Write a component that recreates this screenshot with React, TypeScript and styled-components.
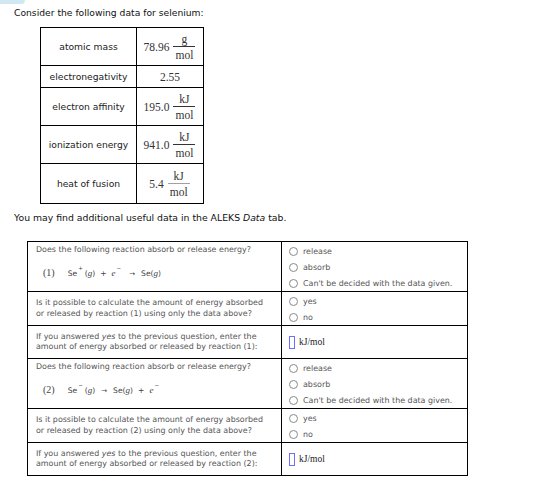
import React from "react";
import styled, { createGlobalStyle } from "styled-components";

const GlobalStyle = createGlobalStyle`
  html, body {
    margin: 0;
    padding: 0;
    background: #ffffff;
  }
  body {
    font-family: "DejaVu Sans", Verdana, sans-serif;
  }
  td {
    box-sizing: border-box;
  }
`;

const Page = styled.div`
  width: 554px;
  height: 478px;
  overflow: hidden;
  display: flex;
  flex-direction: column;
`;

const TopTab = styled.div`
  width: 25px;
  height: 4px;
  flex-shrink: 0;
  background: #cfe8f2;
  border-bottom-right-radius: 6px;
`;

const Title = styled.div`
  margin: 2px 0 0 14px;
  font-size: 9.2px;
  line-height: 14px;
  color: #111;
`;

const DataTable = styled.table`
  margin: 7px 0 0 40px;
  border-collapse: collapse;
  table-layout: fixed;
  width: 164px;
`;

const LabelCell = styled.td<{ $h: number }>`
  width: 96px;
  height: ${(p) => p.$h}px;
  border: 1px solid #000;
  padding: 0;
  text-align: center;
  font-size: 9.2px;
  color: #222;
`;

const ValueCell = styled.td`
  border: 1px solid #000;
  padding: 0;
  text-align: center;
  font-family: "Liberation Serif", "Times New Roman", serif;
  font-size: 11.5px;
  color: #333;
`;

const ValueWrap = styled.span`
  display: inline-flex;
  align-items: center;
  gap: 3px;
`;

const Frac = styled.span`
  display: inline-flex;
  flex-direction: column;
  align-items: center;
  line-height: 12px;
  padding: 0 1px;
`;

const FracBar = styled.span<{ $light?: boolean }>`
  align-self: stretch;
  height: 1px;
  margin: 1px 0 2px;
  background: ${(p) => (p.$light ? "#a0a0a0" : "#333")};
`;

const FracPart = styled.span`
  padding: 0 2px;
`;

const Note = styled.div`
  margin: 7px 0 0 14px;
  font-size: 9.3px;
  line-height: 14px;
  color: #111;
  em {
    font-style: italic;
  }
`;

const QTable = styled.table`
  margin: 16px 0 0 27px;
  border-collapse: collapse;
  table-layout: fixed;
  width: 441px;
`;

const QCell = styled.td<{ $top?: boolean; $h: number }>`
  width: 254px;
  height: ${(p) => p.$h}px;
  border: 1px solid #000;
  padding: ${(p) => (p.$top ? "3px 4px 0 8px" : "0 4px 0 8px")};
  vertical-align: ${(p) => (p.$top ? "top" : "middle")};
  font-size: 7.95px;
  line-height: 10.5px;
  color: #555;
  white-space: nowrap;
  em {
    font-style: italic;
  }
`;

const ACell = styled.td<{ $top?: boolean }>`
  border: 1px solid #000;
  padding: ${(p) => (p.$top ? "1px 0 0 7px" : "0 0 0 7px")};
  vertical-align: ${(p) => (p.$top ? "top" : "middle")};
`;

const Reaction = styled.div`
  margin: 11px 0 0 7px;
  line-height: 12px;
  white-space: nowrap;
  font-size: 7.6px;
  color: #444;
`;

const Num = styled.span`
  font-family: "Liberation Serif", "Times New Roman", serif;
  font-size: 10px;
  margin-right: 13px;
`;

const Sup = styled.sup`
  font-size: 5.5px;
  line-height: 0;
  vertical-align: 6px;
  margin: 0 2px 0 1px;
`;

const Ital = styled.span`
  font-family: "Liberation Serif", "Times New Roman", serif;
  font-style: italic;
  font-size: 9px;
`;

const Op = styled.span`
  margin: 0 5px;
`;

const Arrow = styled.span`
  margin: 0 6px;
  font-size: 7px;
`;

const Options = styled.div`
  display: flex;
  flex-direction: column;
`;

const Option = styled.label`
  display: flex;
  align-items: center;
  height: 16px;
  gap: 5px;
  font-size: 7.95px;
  color: #555;
`;

const Radio = styled.span`
  width: 7px;
  height: 7px;
  border: 1px solid #8a8a8a;
  border-radius: 50%;
  background: #fff;
  flex-shrink: 0;
`;

const AnswerLine = styled.div`
  display: flex;
  align-items: center;
  gap: 4px;
  font-family: "Liberation Serif", "Times New Roman", serif;
  font-size: 9.5px;
  color: #222;
`;

const InputBox = styled.span`
  width: 4px;
  height: 11px;
  border: 1px solid #6d6dff;
  background: #fff;
`;

const ButtonBar = styled.div`
  margin: 2px 0 0 345px;
`;

const GhostButton = styled.div`
  width: 120px;
  height: 20px;
  border: 1px solid #b4cad4;
  border-radius: 7px;
  background: #fff;
`;

type DataItem = {
  label: string;
  value: string;
  num?: string;
  h: number;
  light?: boolean;
};

const data: DataItem[] = [
  { label: "atomic mass", value: "78.96", num: "g", h: 38 },
  { label: "electronegativity", value: "2.55", h: 22 },
  { label: "electron affinity", value: "195.0", num: "kJ", h: 38 },
  { label: "ionization energy", value: "941.0", num: "kJ", h: 38 },
  { label: "heat of fusion", value: "5.4", num: "kJ", h: 40, light: true },
];

const RadioGroup = ({ items }: { items: string[] }) => (
  <Options>
    {items.map((t) => (
      <Option key={t}>
        <Radio />
        {t}
      </Option>
    ))}
  </Options>
);

const Answer = () => (
  <AnswerLine>
    <InputBox />
    kJ/mol
  </AnswerLine>
);

const energyChoices = [
  "release",
  "absorb",
  "Can't be decided with the data given.",
];

const QuestionBlock = ({ n, reaction }: { n: number; reaction: React.ReactNode }) => (
  <>
    <tr>
      <QCell $top $h={50}>
        Does the following reaction absorb or release energy?
        <Reaction>
          <Num>({n})</Num>
          {reaction}
        </Reaction>
      </QCell>
      <ACell $top>
        <RadioGroup items={energyChoices} />
      </ACell>
    </tr>
    <tr>
      <QCell $h={33}>
        Is it possible to calculate the amount of energy absorbed
        <br />
        or released by reaction ({n}) using only the data above?
      </QCell>
      <ACell $top>
        <RadioGroup items={["yes", "no"]} />
      </ACell>
    </tr>
    <tr>
      <QCell $h={33}>
        If you answered <em>yes</em> to the previous question, enter the
        <br />
        amount of energy absorbed or released by reaction ({n}):
      </QCell>
      <ACell>
        <Answer />
      </ACell>
    </tr>
  </>
);

const App = () => {
  return (
    <Page>
      <GlobalStyle />
      <TopTab />
      <Title>Consider the following data for selenium:</Title>
      <DataTable>
        <tbody>
          {data.map((d) => (
            <tr key={d.label}>
              <LabelCell $h={d.h}>{d.label}</LabelCell>
              <ValueCell>
                <ValueWrap>
                  {d.value}
                  {d.num && (
                    <Frac>
                      <FracPart>{d.num}</FracPart>
                      <FracBar $light={d.light} />
                      <FracPart>mol</FracPart>
                    </Frac>
                  )}
                </ValueWrap>
              </ValueCell>
            </tr>
          ))}
        </tbody>
      </DataTable>
      <Note>
        You may find additional useful data in the ALEKS <em>Data</em> tab.
      </Note>
      <QTable>
        <tbody>
          <QuestionBlock
            n={1}
            reaction={
              <>
                Se<Sup>+</Sup>(<Ital>g</Ital>)<Op>+</Op>
                <Ital>e</Ital>
                <Sup>−</Sup>
                <Arrow>→</Arrow>Se(<Ital>g</Ital>)
              </>
            }
          />
          <QuestionBlock
            n={2}
            reaction={
              <>
                Se<Sup>−</Sup>(<Ital>g</Ital>)<Arrow>→</Arrow>Se(
                <Ital>g</Ital>)<Op>+</Op>
                <Ital>e</Ital>
                <Sup>−</Sup>
              </>
            }
          />
        </tbody>
      </QTable>
      <ButtonBar>
        <GhostButton />
      </ButtonBar>
    </Page>
  );
};

export default App;
